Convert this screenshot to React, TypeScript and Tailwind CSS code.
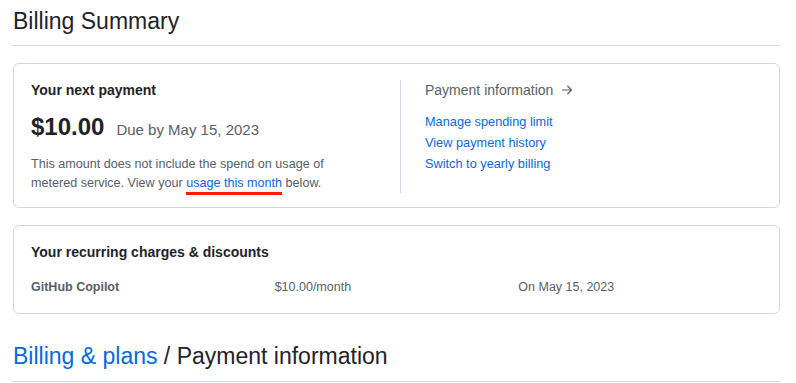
import React from "react";

export default function App() {
  return (
    <div className="w-[796px] h-[383px] overflow-hidden bg-white px-[13px] text-[#1f2328]" style={{ fontFamily: '"Liberation Sans", Arial, sans-serif' }}>
      <div className="pt-[6px] pb-[9px] border-b border-[#d0d7de] w-[767px]">
        <h1 className="text-[23px] leading-[30px] font-normal">Billing Summary</h1>
      </div>

      <div className="mt-[17px] w-[767px] border border-[#d0d7de] rounded-[6px] flex px-[17px] pt-[16px] pb-[14px]">
        <div className="w-[370px] pr-[16px] border-r border-[#d0d7de]">
          <div className="text-[14px] leading-[20px] font-bold">Your next payment</div>
          <div className="flex items-baseline mt-[12px]">
            <span className="text-[24px] leading-[30px] font-bold">$10.00</span>
            <span className="ml-[12px] text-[15px] text-[#57606a]">Due by May 15, 2023</span>
          </div>
          <p className="mt-[13px] whitespace-nowrap text-[12.6px] leading-[19px] text-[#57606a]">
            This amount does not include the spend on usage of
            <br />
            metered service. View your{" "}
            <span className="relative text-[#0969da]">
              usage this month
              <span className="absolute left-0 right-0 -bottom-[5px] h-[3px] bg-[#ff1a00]" />
            </span>{" "}
            below.
          </p>
        </div>
        <div className="pl-[24px]">
          <div className="flex items-center text-[14px] leading-[20px] text-[#57606a]">
            Payment information
            <svg className="ml-[8px]" width="12" height="12" viewBox="0 0 16 16" fill="none" stroke="#57606a" strokeWidth="1.6" strokeLinecap="round" strokeLinejoin="round">
              <path d="M2 8h12M9 3l5 5-5 5" />
            </svg>
          </div>
          <div className="mt-[11px] flex flex-col text-[12.75px] leading-[21px] text-[#0969da]">
            <span>Manage spending limit</span>
            <span>View payment history</span>
            <span>Switch to yearly billing</span>
          </div>
        </div>
      </div>

      <div className="mt-[17px] w-[767px] border border-[#d0d7de] rounded-[6px] px-[17px] pt-[16px] pb-[16px]">
        <div className="text-[14px] leading-[20px] font-bold">Your recurring charges &amp; discounts</div>
        <div className="mt-[15px] grid grid-cols-3 text-[12.5px] leading-[20px] text-[#57606a]">
          <span className="font-bold">GitHub Copilot</span>
          <span>$10.00/month</span>
          <span>On May 15, 2023</span>
        </div>
      </div>

      <div className="mt-[27px] pb-[10px] border-b border-[#d0d7de] w-[767px]">
        <h2 className="text-[23px] leading-[30px] font-normal">
          <span className="text-[#0969da]">Billing &amp; plans</span> / Payment information
        </h2>
      </div>
    </div>
  );
}
